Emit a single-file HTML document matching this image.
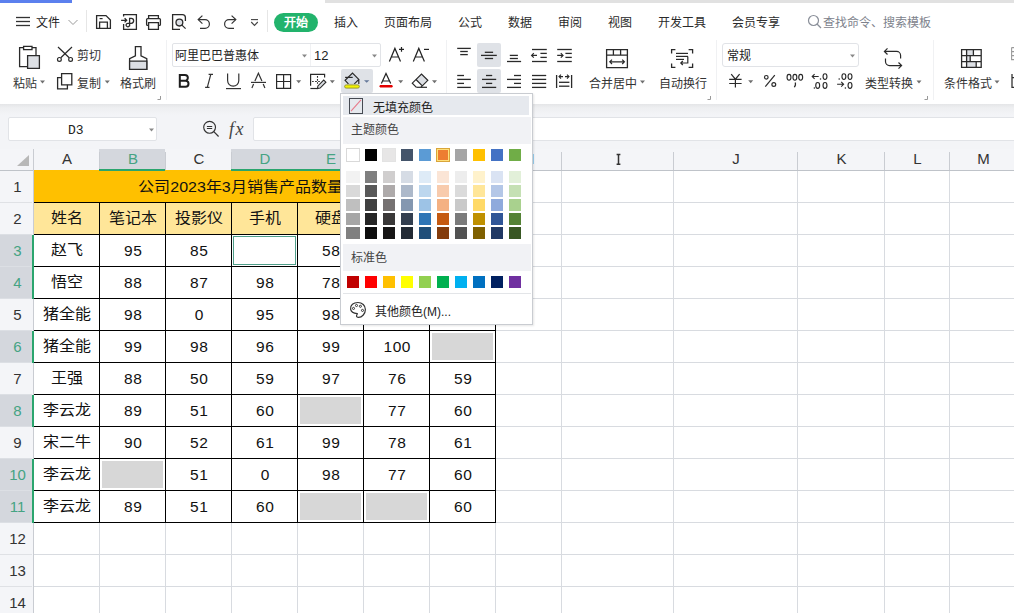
<!DOCTYPE html>
<html lang="zh-CN">
<head>
<meta charset="utf-8">
<style>
*{box-sizing:border-box;margin:0;padding:0}
html,body{width:1014px;height:613px;overflow:hidden;background:#fff}
body{position:relative;font-family:"Liberation Sans",sans-serif;color:#222}
.a{position:absolute}
.t{position:absolute;white-space:nowrap;line-height:1}
svg{position:absolute;overflow:visible}
.tab{position:absolute;font-size:12px;color:#333;line-height:14px;white-space:nowrap}
.rl{position:absolute;font-size:12px;color:#3a3a3a;line-height:14px;white-space:nowrap}
.arr{position:absolute;width:0;height:0;border-left:3px solid transparent;border-right:3px solid transparent;border-top:3px solid #888}
.sep{position:absolute;width:1px;background:#e8e9ec}
.ch{position:absolute;height:20px;font-size:14px;line-height:20px;text-align:center;color:#333}
.rh{position:absolute;left:0;width:32px;font-size:14px;text-align:center;color:#333}
.c{position:absolute;font-size:16px;text-align:center;color:#111;white-space:nowrap}
.hl{position:absolute;height:1px;background:#d9dce1}
.vl{position:absolute;width:1px;background:#d9dce1}
.bk{position:absolute;background:#000}
.sw{position:absolute;width:12px;height:12px}
</style>
</head>
<body>
<div class="a" style="left:0px;top:0px;width:72px;height:3px;background:#5b80ee;"></div>
<div class="a" style="left:325px;top:0px;width:689px;height:3px;background:#e1e1e1;"></div>
<div class="a" style="left:0px;top:104px;width:1014px;height:45px;background:linear-gradient(#e4e5e7,#eeeff1 4px,#f3f4f7 11px);"></div>
<div class="t" style="left:36px;top:16px;font-size:12px;line-height:14px;color:#222;">文件</div>
<div class="a" style="left:86px;top:10px;width:1px;height:22px;background:#e6e6e6;"></div>
<div class="a" style="left:267px;top:10px;width:1px;height:22px;background:#e6e6e6;"></div>
<div class="a" style="left:274px;top:12.5px;width:44px;height:19px;border-radius:10px;background:#22b36c"></div>
<div class="t" style="left:284px;top:16px;font-size:12px;line-height:14px;color:#fff;font-weight:bold">开始</div>
<div class="t" style="left:334px;top:16px;font-size:12px;line-height:14px;color:#2a2a2a;">插入</div>
<div class="t" style="left:384px;top:16px;font-size:12px;line-height:14px;color:#2a2a2a;">页面布局</div>
<div class="t" style="left:458px;top:16px;font-size:12px;line-height:14px;color:#2a2a2a;">公式</div>
<div class="t" style="left:508px;top:16px;font-size:12px;line-height:14px;color:#2a2a2a;">数据</div>
<div class="t" style="left:558px;top:16px;font-size:12px;line-height:14px;color:#2a2a2a;">审阅</div>
<div class="t" style="left:607.5px;top:16px;font-size:12px;line-height:14px;color:#2a2a2a;">视图</div>
<div class="t" style="left:658px;top:16px;font-size:12px;line-height:14px;color:#2a2a2a;">开发工具</div>
<div class="t" style="left:732px;top:16px;font-size:12px;line-height:14px;color:#2a2a2a;">会员专享</div>
<div class="t" style="left:823px;top:16px;font-size:12px;line-height:14px;color:#7d828c;">查找命令、搜索模板</div>
<div class="t" style="left:13px;top:77px;font-size:12px;line-height:14px;color:#333;">粘贴</div>
<div class="t" style="left:77px;top:49px;font-size:12px;line-height:14px;color:#333;">剪切</div>
<div class="t" style="left:77px;top:77px;font-size:12px;line-height:14px;color:#333;">复制</div>
<div class="t" style="left:120px;top:77px;font-size:12px;line-height:14px;color:#333;">格式刷</div>
<div class="a" style="left:166px;top:40px;width:1px;height:60px;background:#f0f1f3;"></div>
<div class="a" style="left:172px;top:43px;width:209px;height:24px;border:1px solid #e1e3e7;border-radius:2px;background:#fff"></div>
<div class="a" style="left:310px;top:44px;width:1px;height:22px;background:#f0f1f3;"></div>
<div class="t" style="left:175px;top:48.5px;font-size:12px;line-height:14px;color:#222;">阿里巴巴普惠体</div>
<div class="t" style="left:314px;top:48.5px;font-size:13px;line-height:14px;color:#222;">12</div>
<div class="a" style="left:340.5px;top:69px;width:32px;height:24px;background:#dfe2e7;border-radius:2px"></div>
<div class="a" style="left:446px;top:40px;width:1px;height:60px;background:#f0f1f3;"></div>
<div class="a" style="left:477px;top:43.3px;width:23.6px;height:23.3px;background:#dfe2e7;border-radius:2px"></div>
<div class="a" style="left:477px;top:69.1px;width:23.6px;height:23.6px;background:#dfe2e7;border-radius:2px"></div>
<div class="t" style="left:589px;top:77px;font-size:12px;line-height:14px;color:#333;">合并居中</div>
<div class="t" style="left:658.5px;top:77px;font-size:12px;line-height:14px;color:#333;">自动换行</div>
<div class="a" style="left:716px;top:40px;width:1px;height:60px;background:#f0f1f3;"></div>
<div class="a" style="left:722px;top:43px;width:137px;height:24px;border:1px solid #e1e3e7;border-radius:3px;background:#fff"></div>
<div class="t" style="left:726.5px;top:48.5px;font-size:12px;line-height:14px;color:#222;">常规</div>
<div class="t" style="left:865px;top:77px;font-size:12px;line-height:14px;color:#333;">类型转换</div>
<div class="a" style="left:933px;top:40px;width:1px;height:60px;background:#f0f1f3;"></div>
<div class="t" style="left:944px;top:77px;font-size:12px;line-height:14px;color:#333;">条件格式</div>
<div class="a" style="left:8px;top:117px;width:149px;height:24px;border:1px solid #e1e3e7;border-radius:2px;background:#fff"></div>
<div class="t" style="left:68px;top:124px;font-size:13px;line-height:14px;color:#222;font-family:'Liberation Mono',monospace">D3</div>
<div class="t" style="left:229px;top:119.5px;font-size:18px;line-height:18px;color:#444;font-family:'Liberation Serif',serif;font-style:italic;letter-spacing:1.5px">fx</div>
<div class="a" style="left:253px;top:117px;width:800px;height:24px;border:1px solid #e1e3e7;border-radius:2px;background:#fff"></div>
<svg style="left:0;top:0" width="1014" height="150" viewBox="0 0 1014 150" fill="none"><path d="M16 17.5 H30" stroke="#333" stroke-width="1.3" fill="none" /><path d="M16 21.5 H30" stroke="#333" stroke-width="1.3" fill="none" /><path d="M16 25.5 H30" stroke="#333" stroke-width="1.3" fill="none" /><path d="M68.5 20 L73 24.5 L77.5 20" stroke="#9a9a9a" stroke-width="1" fill="none" /><path d="M96.6 15.6 H106 L110.4 20 V28.4 H96.6 Z" stroke="#2a2a2a" stroke-width="1.3" fill="none" /><path d="M99.6 28.4 V22.2 H107.4 V28.4" stroke="#2a2a2a" stroke-width="1.3" fill="none" /><path d="M99.6 18.6 H102.6" stroke="#2a2a2a" stroke-width="1.2" fill="none" /><path d="M123.6 16.4 V14.6 H136.4 V29.4 H123.6 V24.1" stroke="#2a2a2a" stroke-width="1.3" fill="none" /><path d="M121.1 20.3 H126.7 M124.6 18.2 L126.7 20.3 L124.6 22.4" stroke="#2a2a2a" stroke-width="1.3" fill="none" /><path d="M129.6 26.2 V18.4 H131.2 A2.45 2.45 0 0 1 131.2 23.3 H128.1 A1.75 1.75 0 1 0 129.6 25" stroke="#2a2a2a" stroke-width="1.3" fill="none" /><path d="M148.6 18.6 V15.6 H158.4 V18.6" stroke="#2a2a2a" stroke-width="1.3" fill="none" /><path d="M148 25.4 H147.6 Q146.6 25.4 146.6 24.4 V19.6 Q146.6 18.6 147.6 18.6 H159.4 Q160.4 18.6 160.4 19.6 V24.4 Q160.4 25.4 159.4 25.4 H159" stroke="#2a2a2a" stroke-width="1.3" fill="none" /><path d="M148.6 22.6 H158.4 V29.4 H148.6 Z" stroke="#2a2a2a" stroke-width="1.3" fill="none" /><path d="M180 29.4 H172.6 V14.6 H182.4 Q185.4 14.6 185.4 17.6 V21" stroke="#2a2a2a" stroke-width="1.3" fill="none" /><circle cx="179.4" cy="22.6" r="3.4" fill="#dde0e5" stroke="#2a2a2a" stroke-width="1.3"/><path d="M181.9 25.1 L185.6 28.6" stroke="#2a2a2a" stroke-width="1.3" fill="none" /><path d="M202.4 15.6 L198.2 19.6 L202.4 23.6" stroke="#333" stroke-width="1.2" fill="none" /><path d="M198.4 19.6 H205 A4.4 4.4 0 0 1 205 28.4 H200" stroke="#333" stroke-width="1.2" fill="none" /><path d="M231.6 15.6 L235.8 19.6 L231.6 23.6" stroke="#333" stroke-width="1.2" fill="none" /><path d="M235.6 19.6 H229 A4.4 4.4 0 0 0 229 28.4 H234" stroke="#333" stroke-width="1.2" fill="none" /><path d="M251 19.6 H258" stroke="#444" stroke-width="1.1" fill="none" /><path d="M251.2 22 L254.5 25.4 L257.8 22" stroke="#444" stroke-width="1.1" fill="none" /><circle cx="813.5" cy="20.5" r="5" fill="none" stroke="#8a8f99" stroke-width="1.2"/><path d="M817 24 L821 28" stroke="#8a8f99" stroke-width="1.2" fill="none" /><path d="M27.4 66.6 H19.6 V47.6 H36 V55.4" stroke="#2a2a2a" stroke-width="1.3" fill="none" /><path d="M23.6 46.4 H32 V49.6 H23.6 Z" stroke="#2a2a2a" stroke-width="1.3" fill="#fff" /><path d="M27.6 55.6 H39.4 V68.4 H27.6 Z" stroke="#2a2a2a" stroke-width="1.3" fill="#dcdfe4" /><path d="M40 80.6 H45 L42.5 83.6 Z" fill="#707070" stroke="none"/><path d="M58 47 L69.2 57.8 M72 47 L60.8 57.8" stroke="#2a2a2a" stroke-width="1.2" fill="none" /><circle cx="59.4" cy="59.4" r="1.9" fill="#fff" stroke="#2a2a2a" stroke-width="1.2"/><circle cx="70.6" cy="59.4" r="1.9" fill="#fff" stroke="#2a2a2a" stroke-width="1.2"/><path d="M61.6 73.6 H71.8 V84.8 H61.6 Z" stroke="#2a2a2a" stroke-width="1.3" fill="none" /><path d="M61.6 77.6 H57.6 V88.8 H67.4 V84.8" stroke="#2a2a2a" stroke-width="1.3" fill="none" /><path d="M104.8 80.6 H109.8 L107.3 83.6 Z" fill="#707070" stroke="none"/><path d="M129.6 61 V58.6 L135.4 55.8 V46.6 H141 V55.8 L146.8 58.6 V69.4 H129.6 Z" stroke="#2a2a2a" stroke-width="1.3" fill="none" /><path d="M129.6 61.2 H146.8 V69.4 H129.6 Z" stroke="#2a2a2a" stroke-width="1.3" fill="#dcdfe4" /><path d="M157.5 99.5 H160.5 V96" stroke="#999" stroke-width="1" fill="none" /><path d="M302 54.5 H307 L304.5 57.5 Z" fill="#888" stroke="none"/><path d="M372 54.5 H377 L374.5 57.5 Z" fill="#888" stroke="none"/><path d="M389.4 61.6 L394.9 48.4 L400.5 61.6 M391.6 57 H398.4" stroke="#222" stroke-width="1.2" fill="none" /><path d="M399 49.4 H404 M401.5 46.9 V51.7" stroke="#222" stroke-width="1.2" fill="none" /><path d="M413.3 61.6 L418.8 48.4 L424.4 61.6 M415.5 57 H422.2" stroke="#222" stroke-width="1.2" fill="none" /><path d="M424 49.4 H429" stroke="#222" stroke-width="1.2" fill="none" /><path d="M179.8 86.8 V74.9 H184.9 A2.95 2.95 0 0 1 184.9 80.8 H179.8 M184.9 80.8 H185.5 A3 3 0 0 1 185.5 86.8 H178.8" stroke="#1e1e1e" stroke-width="2" fill="none" /><path d="M208.6 74.4 H213 M205.1 87.4 H209.5 M210.8 74.4 L207.3 87.4" stroke="#333" stroke-width="1.2" fill="none" /><path d="M227.6 73.6 V80.6 A5.6 5.6 0 0 0 238.8 80.6 V73.6" stroke="#333" stroke-width="1.2" fill="none" /><path d="M226 88.6 H241" stroke="#333" stroke-width="1.2" fill="none" /><path d="M254.9 81 L258.4 73.2 L261.9 81 M253.6 84 L251.9 88 M263.2 84 L264.9 88" stroke="#333" stroke-width="1.2" fill="none" /><path d="M251 82.4 H266" stroke="#333" stroke-width="1.2" fill="none" /><path d="M276.6 74.6 H290.6 V88.4 H276.6 Z M283.6 74.6 V88.4 M276.6 81.5 H290.6" stroke="#2a2a2a" stroke-width="1.2" fill="none" /><path d="M296.2 80.2 H301.2 L298.7 83.2 Z" fill="#707070" stroke="none"/><path d="M310.6 85.8 V74.4 H324.6 V77.6" stroke="#2a2a2a" stroke-width="1.2" fill="none" /><path d="M310.4 88.5 H317.6" stroke="#2a2a2a" stroke-width="1.2" fill="none" /><path d="M312.1 81.5 H313.7 M315.1 81.5 H316.8 M318.2 81.5 H319.8 M317.5 76.1 V77.7 M317.5 79.1 V80.8 M317.5 82.2 V83.8" stroke="#2a2a2a" stroke-width="1.1" fill="none" /><path d="M317.5 88.5 L317.9 85.9 L323.7 80 L325.9 82.2 L320.1 88.1 Z" stroke="#2a2a2a" stroke-width="1.1" fill="#dcdfe4" /><path d="M329.8 80.2 H334.8 L332.3 83.2 Z" fill="#707070" stroke="none"/><path d="M348.4 83.9 L345.1 80.3 L352.5 73.1 L358.8 79.4 L354.3 83.9 Z" stroke="#2a2a2a" stroke-width="0.1" fill="#d3d9e2" /><path d="M348.4 83.9 L345.1 80.3 L352.5 73.1 L358.8 79.4 L354.3 83.9 M358.8 79.4 V84" stroke="#2a2a2a" stroke-width="1.2" fill="none" /><path d="M345.1 77.4 H352.7" stroke="#2a2a2a" stroke-width="1.2" fill="none" /><rect x="344.6" y="84.9" width="14.8" height="3.2" rx="1.6" fill="#f2f200" stroke="#9c9c30" stroke-width="1"/><path d="M364 80.2 H369.4 L366.7 82.8 Z" fill="#65789a" stroke="none"/><path d="M381.4 83.4 L386 73.4 L390.7 83.4 M382.6 81 H389.5" stroke="#222" stroke-width="1.2" fill="none" /><path d="M380.2 85 H392 L393 86.3 L392 87.6 H380.2 L379.2 86.3 Z" fill="#e30000" stroke="none"/><path d="M398.2 80.2 H403.2 L400.7 83.2 Z" fill="#707070" stroke="none"/><path d="M421.5 74 L427.8 80.3 L422.3 85.8 L416 79.5 Z" stroke="#2a2a2a" stroke-width="0.1" fill="#dcdfe4" /><path d="M416.4 87.3 L412.3 83.2 L421.5 74 L427.8 80.3 L420.8 87.3 M416 79.5 L422.3 85.8" stroke="#2a2a2a" stroke-width="1.2" fill="none" /><path d="M416.4 87.3 H427" stroke="#2a2a2a" stroke-width="1.2" fill="none" /><path d="M432 80.2 H437 L434.5 83.2 Z" fill="#707070" stroke="none"/><path d="M457.2 48.4 H470.8" stroke="#2a2a2a" stroke-width="1.3" fill="none" /><path d="M460.2 51.5 H467.8" stroke="#2a2a2a" stroke-width="1.3" fill="none" /><path d="M460.2 54.6 H467.8" stroke="#2a2a2a" stroke-width="1.3" fill="none" /><path d="M484.8 52.3 H493.1" stroke="#2a2a2a" stroke-width="1.3" fill="none" /><path d="M481 55.4 H496.8" stroke="#2a2a2a" stroke-width="1.3" fill="none" /><path d="M484.8 58.5 H493.1" stroke="#2a2a2a" stroke-width="1.3" fill="none" /><path d="M509.8 55.4 H517.9" stroke="#2a2a2a" stroke-width="1.3" fill="none" /><path d="M509.8 58.5 H517.9" stroke="#2a2a2a" stroke-width="1.3" fill="none" /><path d="M507 61.5 H521.1" stroke="#2a2a2a" stroke-width="1.3" fill="none" /><path d="M457.2 75.5 H464" stroke="#2a2a2a" stroke-width="1.3" fill="none" /><path d="M486 75.5 H492.2" stroke="#2a2a2a" stroke-width="1.3" fill="none" /><path d="M514 75.5 H521" stroke="#2a2a2a" stroke-width="1.3" fill="none" /><path d="M457.2 79.4 H470.8" stroke="#2a2a2a" stroke-width="1.3" fill="none" /><path d="M482 79.4 H496.2" stroke="#2a2a2a" stroke-width="1.3" fill="none" /><path d="M507 79.4 H521" stroke="#2a2a2a" stroke-width="1.3" fill="none" /><path d="M457.2 83.4 H464" stroke="#2a2a2a" stroke-width="1.3" fill="none" /><path d="M486 83.4 H492.2" stroke="#2a2a2a" stroke-width="1.3" fill="none" /><path d="M514 83.4 H521" stroke="#2a2a2a" stroke-width="1.3" fill="none" /><path d="M457.2 87.4 H470.8" stroke="#2a2a2a" stroke-width="1.3" fill="none" /><path d="M482 87.4 H496.2" stroke="#2a2a2a" stroke-width="1.3" fill="none" /><path d="M507 87.4 H521" stroke="#2a2a2a" stroke-width="1.3" fill="none" /><path d="M532 49.5 H546.8" stroke="#2a2a2a" stroke-width="1.3" fill="none" /><path d="M540.4 53.4 H546.8" stroke="#2a2a2a" stroke-width="1.3" fill="none" /><path d="M540.4 57.4 H546.8" stroke="#2a2a2a" stroke-width="1.3" fill="none" /><path d="M532 61.5 H546.8" stroke="#2a2a2a" stroke-width="1.3" fill="none" /><path d="M531.6 55.4 H537 M533.8 53.2 L531.6 55.4 L533.8 57.6" stroke="#2a2a2a" stroke-width="1.2" fill="none" /><path d="M557.2 49.5 H571.8" stroke="#2a2a2a" stroke-width="1.3" fill="none" /><path d="M565.4 53.4 H571.8" stroke="#2a2a2a" stroke-width="1.3" fill="none" /><path d="M565.4 57.4 H571.8" stroke="#2a2a2a" stroke-width="1.3" fill="none" /><path d="M557.2 61.5 H571.8" stroke="#2a2a2a" stroke-width="1.3" fill="none" /><path d="M557.2 55.4 H563 M560.8 53.2 L563 55.4 L560.8 57.6" stroke="#2a2a2a" stroke-width="1.2" fill="none" /><path d="M532 75.5 H546.2" stroke="#2a2a2a" stroke-width="1.3" fill="none" /><path d="M532 79.4 H546.2" stroke="#2a2a2a" stroke-width="1.3" fill="none" /><path d="M532 83.4 H546.2" stroke="#2a2a2a" stroke-width="1.3" fill="none" /><path d="M532 87.4 H546.2" stroke="#2a2a2a" stroke-width="1.3" fill="none" /><path d="M556.6 75 V88 M571.6 75 V88" stroke="#2a2a2a" stroke-width="1.3" fill="none" /><path d="M559 76.6 H563 M561 74.6 L559 76.6 L561 78.6 M565 76.6 H569 M567 74.6 L569 76.6 L567 78.6" stroke="#2a2a2a" stroke-width="1.1" fill="none" /><path d="M559 82.3 H569.4" stroke="#2a2a2a" stroke-width="1.3" fill="none" /><path d="M559 86.2 H569.4" stroke="#2a2a2a" stroke-width="1.3" fill="none" /><path d="M606.6 49.6 H627.4 V67.6 H606.6 Z M606.6 55.2 H627.4 M613.4 49.6 V55.2 M620.6 49.6 V55.2" stroke="#2a2a2a" stroke-width="1.3" fill="none" /><path d="M609.8 61.8 H624.4 M612 59.6 L609.8 61.8 L612 64 M622.2 59.6 L624.4 61.8 L622.2 64" stroke="#2a2a2a" stroke-width="1.2" fill="none" /><path d="M640 80.6 H645 L642.5 83.6 Z" fill="#707070" stroke="none"/><path d="M675.4 49.6 H671.6 V53.6 M688.6 49.6 H692.6 V53.6 M671.6 63.4 V67.4 H675.4 M692.6 63.4 V67.4 H688.6" stroke="#2a2a2a" stroke-width="1.3" fill="none" /><path d="M676 53.4 H688" stroke="#2a2a2a" stroke-width="1.2" fill="none" /><path d="M676 56.4 H688" stroke="#2a2a2a" stroke-width="1.2" fill="none" /><path d="M676 59.4 H684" stroke="#2a2a2a" stroke-width="1.2" fill="none" /><path d="M687.8 56.4 V63 H680.8 M682.8 61 L680.8 63 L682.8 65" stroke="#2a2a2a" stroke-width="1.2" fill="none" /><path d="M707.5 99.5 H710.5 V96" stroke="#999" stroke-width="1" fill="none" /><path d="M850 54.5 H855 L852.5 57.5 Z" fill="#888" stroke="none"/><path d="M731.2 74.2 L735.4 79.2 L739.6 74.2 M729.2 79.4 H741.6 M729.2 83.5 H741.6 M735.4 79.2 V87.6" stroke="#2a2a2a" stroke-width="1.2" fill="none" /><path d="M748.2 80.2 H753.2 L750.7 83.2 Z" fill="#707070" stroke="none"/><circle cx="766.3" cy="77.3" r="1.8" fill="none" stroke="#2a2a2a" stroke-width="1.2"/><circle cx="773.8" cy="84.5" r="1.9" fill="none" stroke="#2a2a2a" stroke-width="1.2"/><path d="M774.8 75.2 L765.3 86.6" stroke="#2a2a2a" stroke-width="1.2" fill="none" /><ellipse cx="789" cy="77.3" rx="1.95" ry="2.9" fill="none" stroke="#2a2a2a" stroke-width="1.15"/><ellipse cx="794.9" cy="77.3" rx="1.95" ry="2.9" fill="none" stroke="#2a2a2a" stroke-width="1.15"/><ellipse cx="800.7" cy="77.3" rx="1.95" ry="2.9" fill="none" stroke="#2a2a2a" stroke-width="1.15"/><path d="M795.4 82.6 V85 L794.4 87.2" stroke="#2a2a2a" stroke-width="1.3" fill="none" /><path d="M812.2 76.5 H818.7 M814.6 74.1 L812.2 76.5 L814.6 78.9" stroke="#2a2a2a" stroke-width="1.1" fill="none" /><rect x="819.85" y="78.35" width="1.3" height="1.3" fill="#2a2a2a"/><ellipse cx="825" cy="76.6" rx="1.95" ry="2.9" fill="none" stroke="#2a2a2a" stroke-width="1.15"/><rect x="813.75" y="87.35" width="1.3" height="1.3" fill="#2a2a2a"/><ellipse cx="817.7" cy="85.4" rx="1.95" ry="2.9" fill="none" stroke="#2a2a2a" stroke-width="1.15"/><ellipse cx="825" cy="85.4" rx="1.95" ry="2.9" fill="none" stroke="#2a2a2a" stroke-width="1.15"/><rect x="838.5500000000001" y="78.35" width="1.3" height="1.3" fill="#2a2a2a"/><ellipse cx="843.9" cy="76.6" rx="1.95" ry="2.9" fill="none" stroke="#2a2a2a" stroke-width="1.15"/><ellipse cx="850" cy="76.6" rx="1.95" ry="2.9" fill="none" stroke="#2a2a2a" stroke-width="1.15"/><path d="M837.1 84.3 H843.6 M841.2 81.9 L843.6 84.3 L841.2 86.7" stroke="#2a2a2a" stroke-width="1.1" fill="none" /><rect x="844.75" y="87.35" width="1.3" height="1.3" fill="#2a2a2a"/><ellipse cx="850" cy="85.4" rx="1.95" ry="2.9" fill="none" stroke="#2a2a2a" stroke-width="1.15"/><path d="M884.4 51.4 H896.6 A4 4 0 0 1 900.6 55.4 V58.6 M887.5 48.3 L884.4 51.4 L887.5 54.5" stroke="#2a2a2a" stroke-width="1.2" fill="none" /><path d="M885.5 58.4 V61.6 A4 4 0 0 0 889.5 65.6 H901.6 M898.5 62.5 L901.6 65.6 L898.5 68.7" stroke="#2a2a2a" stroke-width="1.2" fill="none" /><path d="M916.5 80.6 H921.5 L919.0 83.6 Z" fill="#707070" stroke="none"/><path d="M924.5 99.5 H927.5 V96" stroke="#999" stroke-width="1" fill="none" /><rect x="967" y="50" width="6" height="5.5" fill="#dcdfe4"/><rect x="967" y="56" width="3" height="5.5" fill="#dcdfe4"/><rect x="967" y="62" width="9" height="5" fill="#dcdfe4"/><path d="M961.6 49.6 H981.2 V67.4 H961.6 Z M961.6 55.6 H981.2 M961.6 61.6 H981.2 M966.6 49.6 V67.4 M973.4 49.6 V55.6 M970.2 55.6 V61.6 M976.2 61.6 V67.4" stroke="#2a2a2a" stroke-width="1.3" fill="none" /><path d="M994.5 80.6 H999.5 L997.0 83.6 Z" fill="#707070" stroke="none"/><path d="M1011.6 47.6 H1020 M1011.6 47.6 V59.6 H1020 M1011.6 51.6 H1020 M1011.6 55.6 H1020" stroke="#9a9a9a" stroke-width="1.1" fill="none" /><path d="M1012 74 V88 M1011.5 77.6 H1014 M1011.5 87.4 H1014" stroke="#333" stroke-width="1.3" fill="none" /><path d="M149 128.4 H154 L151.5 131.4 Z" fill="#888" stroke="none"/><circle cx="209.6" cy="127.3" r="5.9" fill="none" stroke="#333" stroke-width="1.15"/><path d="M206.9 126.5 H212.2 M206.9 128.5 H212.2" stroke="#333" stroke-width="1.1" fill="none" /><path d="M213.8 131.6 L218.6 136.5" stroke="#333" stroke-width="1.2" fill="none" /></svg>
<div class="a" style="left:0px;top:149px;width:1014px;height:21px;background:#f4f5f8;"></div>
<div class="a" style="left:0px;top:170px;width:33px;height:443px;background:#f4f5f8;"></div>
<div class="a" style="left:99px;top:149px;width:66px;height:21px;background:#d4d7dd;"></div>
<div class="a" style="left:99px;top:169px;width:66px;height:2px;background:#2ba56e;"></div>
<div class="a" style="left:231px;top:149px;width:66px;height:21px;background:#d4d7dd;"></div>
<div class="a" style="left:231px;top:169px;width:66px;height:2px;background:#2ba56e;"></div>
<div class="a" style="left:297px;top:149px;width:66px;height:21px;background:#d4d7dd;"></div>
<div class="a" style="left:297px;top:169px;width:66px;height:2px;background:#2ba56e;"></div>
<div class="a" style="left:363px;top:149px;width:66px;height:21px;background:#d4d7dd;"></div>
<div class="a" style="left:363px;top:169px;width:66px;height:2px;background:#2ba56e;"></div>
<div class="a" style="left:429px;top:149px;width:66px;height:21px;background:#d4d7dd;"></div>
<div class="a" style="left:429px;top:169px;width:66px;height:2px;background:#2ba56e;"></div>
<div class="a" style="left:0px;top:170px;width:1014px;height:1px;background:#bfc3c9;"></div>
<div class="a" style="left:0px;top:235px;width:33px;height:32px;background:#d4d7dd;"></div>
<div class="a" style="left:32px;top:235px;width:2px;height:32px;background:#2ba56e;"></div>
<div class="a" style="left:0px;top:267px;width:33px;height:32px;background:#d4d7dd;"></div>
<div class="a" style="left:32px;top:267px;width:2px;height:32px;background:#2ba56e;"></div>
<div class="a" style="left:0px;top:331px;width:33px;height:32px;background:#d4d7dd;"></div>
<div class="a" style="left:32px;top:331px;width:2px;height:32px;background:#2ba56e;"></div>
<div class="a" style="left:0px;top:395px;width:33px;height:32px;background:#d4d7dd;"></div>
<div class="a" style="left:32px;top:395px;width:2px;height:32px;background:#2ba56e;"></div>
<div class="a" style="left:0px;top:459px;width:33px;height:32px;background:#d4d7dd;"></div>
<div class="a" style="left:32px;top:459px;width:2px;height:32px;background:#2ba56e;"></div>
<div class="a" style="left:0px;top:491px;width:33px;height:32px;background:#d4d7dd;"></div>
<div class="a" style="left:32px;top:491px;width:2px;height:32px;background:#2ba56e;"></div>
<div class="a" style="left:99px;top:152px;width:1px;height:18px;background:#c9ccd2;"></div>
<div class="a" style="left:165px;top:152px;width:1px;height:18px;background:#c9ccd2;"></div>
<div class="a" style="left:231px;top:152px;width:1px;height:18px;background:#c9ccd2;"></div>
<div class="a" style="left:495px;top:152px;width:1px;height:18px;background:#c9ccd2;"></div>
<div class="a" style="left:561px;top:152px;width:1px;height:18px;background:#c9ccd2;"></div>
<div class="a" style="left:673px;top:152px;width:1px;height:18px;background:#c9ccd2;"></div>
<div class="a" style="left:797px;top:152px;width:1px;height:18px;background:#c9ccd2;"></div>
<div class="a" style="left:884px;top:152px;width:1px;height:18px;background:#c9ccd2;"></div>
<div class="a" style="left:949px;top:152px;width:1px;height:18px;background:#c9ccd2;"></div>
<div class="a" style="left:33px;top:149px;width:1px;height:464px;background:#c9ccd2;"></div>
<div class="a" style="left:32px;top:235px;width:2px;height:32px;background:#2ba56e;"></div>
<div class="a" style="left:32px;top:267px;width:2px;height:32px;background:#2ba56e;"></div>
<div class="a" style="left:32px;top:331px;width:2px;height:32px;background:#2ba56e;"></div>
<div class="a" style="left:32px;top:395px;width:2px;height:32px;background:#2ba56e;"></div>
<div class="a" style="left:32px;top:459px;width:2px;height:32px;background:#2ba56e;"></div>
<div class="a" style="left:32px;top:491px;width:2px;height:32px;background:#2ba56e;"></div>
<div class="a" style="left:0px;top:202px;width:32px;height:1px;background:#dfe1e5;"></div>
<div class="a" style="left:0px;top:234px;width:32px;height:1px;background:#dcdfe4;"></div>
<div class="a" style="left:0px;top:266px;width:32px;height:1px;background:#dcdfe4;"></div>
<div class="a" style="left:0px;top:298px;width:32px;height:1px;background:#dcdfe4;"></div>
<div class="a" style="left:0px;top:330px;width:32px;height:1px;background:#dcdfe4;"></div>
<div class="a" style="left:0px;top:362px;width:32px;height:1px;background:#dcdfe4;"></div>
<div class="a" style="left:0px;top:394px;width:32px;height:1px;background:#dcdfe4;"></div>
<div class="a" style="left:0px;top:426px;width:32px;height:1px;background:#dcdfe4;"></div>
<div class="a" style="left:0px;top:458px;width:32px;height:1px;background:#dcdfe4;"></div>
<div class="a" style="left:0px;top:490px;width:32px;height:1px;background:#dcdfe4;"></div>
<div class="a" style="left:0px;top:522px;width:32px;height:1px;background:#dcdfe4;"></div>
<div class="a" style="left:0px;top:554px;width:32px;height:1px;background:#dfe1e5;"></div>
<div class="a" style="left:0px;top:586px;width:32px;height:1px;background:#dfe1e5;"></div>
<svg style="left:17px;top:155px" width="12" height="11" viewBox="0 0 12 11"><path d="M12 0 L12 11 L0 11 Z" fill="#b8b8b8" stroke="none"/></svg>
<div class="t" style="left:34px;top:151px;width:66px;text-align:center;font-size:15px;line-height:16px;color:#333;">A</div>
<div class="t" style="left:100px;top:151px;width:66px;text-align:center;font-size:15px;line-height:16px;color:#45a383;">B</div>
<div class="t" style="left:166px;top:151px;width:66px;text-align:center;font-size:15px;line-height:16px;color:#333;">C</div>
<div class="t" style="left:232px;top:151px;width:66px;text-align:center;font-size:15px;line-height:16px;color:#45a383;">D</div>
<div class="t" style="left:298px;top:151px;width:66px;text-align:center;font-size:15px;line-height:16px;color:#45a383;">E</div>
<div class="t" style="left:364px;top:151px;width:66px;text-align:center;font-size:15px;line-height:16px;color:#45a383;">F</div>
<div class="t" style="left:430px;top:151px;width:66px;text-align:center;font-size:15px;line-height:16px;color:#45a383;">G</div>
<div class="t" style="left:496px;top:151px;width:66px;text-align:center;font-size:15px;line-height:16px;color:#333;">H</div>
<svg style="left:0;top:0" width="1014" height="200" viewBox="0 0 1014 200"><path d="M618.5 154.2 V164.6 M616.6 154.4 H620.4 M616.6 164.3 H620.4" stroke="#333" stroke-width="1.5" fill="none"/></svg>
<div class="t" style="left:674px;top:151px;width:124px;text-align:center;font-size:15px;line-height:16px;color:#333;">J</div>
<div class="t" style="left:798px;top:151px;width:87px;text-align:center;font-size:15px;line-height:16px;color:#333;">K</div>
<div class="t" style="left:885px;top:151px;width:65px;text-align:center;font-size:15px;line-height:16px;color:#333;">L</div>
<div class="t" style="left:950px;top:151px;width:67px;text-align:center;font-size:15px;line-height:16px;color:#333;">M</div>
<div class="t" style="left:1px;top:178.5px;width:33px;text-align:center;font-size:15px;line-height:16px;color:#333;">1</div>
<div class="t" style="left:1px;top:210.5px;width:33px;text-align:center;font-size:15px;line-height:16px;color:#333;">2</div>
<div class="t" style="left:1px;top:242.5px;width:33px;text-align:center;font-size:15px;line-height:16px;color:#45a383;">3</div>
<div class="t" style="left:1px;top:274.5px;width:33px;text-align:center;font-size:15px;line-height:16px;color:#45a383;">4</div>
<div class="t" style="left:1px;top:306.5px;width:33px;text-align:center;font-size:15px;line-height:16px;color:#333;">5</div>
<div class="t" style="left:1px;top:338.5px;width:33px;text-align:center;font-size:15px;line-height:16px;color:#45a383;">6</div>
<div class="t" style="left:1px;top:370.5px;width:33px;text-align:center;font-size:15px;line-height:16px;color:#333;">7</div>
<div class="t" style="left:1px;top:402.5px;width:33px;text-align:center;font-size:15px;line-height:16px;color:#45a383;">8</div>
<div class="t" style="left:1px;top:434.5px;width:33px;text-align:center;font-size:15px;line-height:16px;color:#333;">9</div>
<div class="t" style="left:1px;top:466.5px;width:33px;text-align:center;font-size:15px;line-height:16px;color:#45a383;">10</div>
<div class="t" style="left:1px;top:498.5px;width:33px;text-align:center;font-size:15px;line-height:16px;color:#45a383;">11</div>
<div class="t" style="left:1px;top:530.5px;width:33px;text-align:center;font-size:15px;line-height:16px;color:#333;">12</div>
<div class="t" style="left:1px;top:562.5px;width:33px;text-align:center;font-size:15px;line-height:16px;color:#333;">13</div>
<div class="t" style="left:1px;top:594.5px;width:33px;text-align:center;font-size:15px;line-height:16px;color:#333;">14</div>
<div class="a" style="left:34px;top:202px;width:980px;height:1px;background:#d8dbe0;"></div>
<div class="a" style="left:34px;top:234px;width:980px;height:1px;background:#d8dbe0;"></div>
<div class="a" style="left:34px;top:266px;width:980px;height:1px;background:#d8dbe0;"></div>
<div class="a" style="left:34px;top:298px;width:980px;height:1px;background:#d8dbe0;"></div>
<div class="a" style="left:34px;top:330px;width:980px;height:1px;background:#d8dbe0;"></div>
<div class="a" style="left:34px;top:362px;width:980px;height:1px;background:#d8dbe0;"></div>
<div class="a" style="left:34px;top:394px;width:980px;height:1px;background:#d8dbe0;"></div>
<div class="a" style="left:34px;top:426px;width:980px;height:1px;background:#d8dbe0;"></div>
<div class="a" style="left:34px;top:458px;width:980px;height:1px;background:#d8dbe0;"></div>
<div class="a" style="left:34px;top:490px;width:980px;height:1px;background:#d8dbe0;"></div>
<div class="a" style="left:34px;top:522px;width:980px;height:1px;background:#d8dbe0;"></div>
<div class="a" style="left:34px;top:554px;width:980px;height:1px;background:#d8dbe0;"></div>
<div class="a" style="left:34px;top:586px;width:980px;height:1px;background:#d8dbe0;"></div>
<div class="a" style="left:34px;top:618px;width:980px;height:1px;background:#d8dbe0;"></div>
<div class="a" style="left:99px;top:171px;width:1px;height:442px;background:#d8dbe0;"></div>
<div class="a" style="left:165px;top:171px;width:1px;height:442px;background:#d8dbe0;"></div>
<div class="a" style="left:231px;top:171px;width:1px;height:442px;background:#d8dbe0;"></div>
<div class="a" style="left:297px;top:171px;width:1px;height:442px;background:#d8dbe0;"></div>
<div class="a" style="left:363px;top:171px;width:1px;height:442px;background:#d8dbe0;"></div>
<div class="a" style="left:429px;top:171px;width:1px;height:442px;background:#d8dbe0;"></div>
<div class="a" style="left:495px;top:171px;width:1px;height:442px;background:#d8dbe0;"></div>
<div class="a" style="left:561px;top:171px;width:1px;height:442px;background:#d8dbe0;"></div>
<div class="a" style="left:673px;top:171px;width:1px;height:442px;background:#d8dbe0;"></div>
<div class="a" style="left:797px;top:171px;width:1px;height:442px;background:#d8dbe0;"></div>
<div class="a" style="left:884px;top:171px;width:1px;height:442px;background:#d8dbe0;"></div>
<div class="a" style="left:949px;top:171px;width:1px;height:442px;background:#d8dbe0;"></div>
<div class="a" style="left:34px;top:170px;width:462px;height:32px;background:#ffc000;"></div>
<div class="a" style="left:99px;top:169px;width:66px;height:2px;background:#2ba56e;"></div>
<div class="a" style="left:231px;top:169px;width:66px;height:2px;background:#2ba56e;"></div>
<div class="a" style="left:297px;top:169px;width:66px;height:2px;background:#2ba56e;"></div>
<div class="a" style="left:363px;top:169px;width:66px;height:2px;background:#2ba56e;"></div>
<div class="a" style="left:429px;top:169px;width:66px;height:2px;background:#2ba56e;"></div>
<div class="a" style="left:34px;top:203px;width:462px;height:31px;background:#ffe699;"></div>
<div class="a" style="left:34px;top:235px;width:462px;height:288px;background:#fff;"></div>
<div class="a" style="left:102px;top:461px;width:61px;height:27px;background:#d7d7d7;"></div>
<div class="a" style="left:300px;top:397px;width:61px;height:27px;background:#d7d7d7;"></div>
<div class="a" style="left:300px;top:493px;width:61px;height:27px;background:#d7d7d7;"></div>
<div class="a" style="left:366px;top:493px;width:61px;height:27px;background:#d7d7d7;"></div>
<div class="a" style="left:432px;top:333px;width:61px;height:27px;background:#d7d7d7;"></div>
<div class="a" style="left:34px;top:202px;width:462px;height:1px;background:#000;"></div>
<div class="a" style="left:34px;top:234px;width:462px;height:1px;background:#000;"></div>
<div class="a" style="left:34px;top:266px;width:462px;height:1px;background:#000;"></div>
<div class="a" style="left:34px;top:298px;width:462px;height:1px;background:#000;"></div>
<div class="a" style="left:34px;top:330px;width:462px;height:1px;background:#000;"></div>
<div class="a" style="left:34px;top:362px;width:462px;height:1px;background:#000;"></div>
<div class="a" style="left:34px;top:394px;width:462px;height:1px;background:#000;"></div>
<div class="a" style="left:34px;top:426px;width:462px;height:1px;background:#000;"></div>
<div class="a" style="left:34px;top:458px;width:462px;height:1px;background:#000;"></div>
<div class="a" style="left:34px;top:490px;width:462px;height:1px;background:#000;"></div>
<div class="a" style="left:34px;top:522px;width:462px;height:1px;background:#000;"></div>
<div class="a" style="left:99px;top:202px;width:1px;height:321px;background:#000;"></div>
<div class="a" style="left:165px;top:202px;width:1px;height:321px;background:#000;"></div>
<div class="a" style="left:231px;top:202px;width:1px;height:321px;background:#000;"></div>
<div class="a" style="left:297px;top:202px;width:1px;height:321px;background:#000;"></div>
<div class="a" style="left:363px;top:202px;width:1px;height:321px;background:#000;"></div>
<div class="a" style="left:429px;top:202px;width:1px;height:321px;background:#000;"></div>
<div class="a" style="left:495px;top:171px;width:1px;height:352px;background:#000;"></div>
<div class="a" style="left:233px;top:236px;width:63px;height:29px;border:1px solid #4f9f8a"></div>
<div class="t" style="left:34px;top:210px;width:66px;text-align:center;font-size:16px;line-height:18px;color:#111;transform:scaleY(.89)">姓名</div>
<div class="t" style="left:100px;top:210px;width:66px;text-align:center;font-size:16px;line-height:18px;color:#111;transform:scaleY(.89)">笔记本</div>
<div class="t" style="left:166px;top:210px;width:66px;text-align:center;font-size:16px;line-height:18px;color:#111;transform:scaleY(.89)">投影仪</div>
<div class="t" style="left:232px;top:210px;width:66px;text-align:center;font-size:16px;line-height:18px;color:#111;transform:scaleY(.89)">手机</div>
<div class="t" style="left:298px;top:210px;width:66px;text-align:center;font-size:16px;line-height:18px;color:#111;transform:scaleY(.89)">硬盘</div>
<div class="t" style="left:34px;top:242px;width:66px;text-align:center;font-size:16px;line-height:18px;color:#111;transform:scaleY(.89)">赵飞</div>
<div class="t" style="left:100.5px;top:242px;width:65.5px;text-align:center;font-size:15.5px;line-height:18px;color:#111;letter-spacing:0.6px">95</div>
<div class="t" style="left:166.5px;top:242px;width:65.5px;text-align:center;font-size:15.5px;line-height:18px;color:#111;letter-spacing:0.6px">85</div>
<div class="t" style="left:298.5px;top:242px;width:65.5px;text-align:center;font-size:15.5px;line-height:18px;color:#111;letter-spacing:0.6px">58</div>
<div class="t" style="left:34px;top:274px;width:66px;text-align:center;font-size:16px;line-height:18px;color:#111;transform:scaleY(.89)">悟空</div>
<div class="t" style="left:100.5px;top:274px;width:65.5px;text-align:center;font-size:15.5px;line-height:18px;color:#111;letter-spacing:0.6px">88</div>
<div class="t" style="left:166.5px;top:274px;width:65.5px;text-align:center;font-size:15.5px;line-height:18px;color:#111;letter-spacing:0.6px">87</div>
<div class="t" style="left:232.5px;top:274px;width:65.5px;text-align:center;font-size:15.5px;line-height:18px;color:#111;letter-spacing:0.6px">98</div>
<div class="t" style="left:298.5px;top:274px;width:65.5px;text-align:center;font-size:15.5px;line-height:18px;color:#111;letter-spacing:0.6px">78</div>
<div class="t" style="left:34px;top:306px;width:66px;text-align:center;font-size:16px;line-height:18px;color:#111;transform:scaleY(.89)">猪全能</div>
<div class="t" style="left:100.5px;top:306px;width:65.5px;text-align:center;font-size:15.5px;line-height:18px;color:#111;letter-spacing:0.6px">98</div>
<div class="t" style="left:166.5px;top:306px;width:65.5px;text-align:center;font-size:15.5px;line-height:18px;color:#111;letter-spacing:0.6px">0</div>
<div class="t" style="left:232.5px;top:306px;width:65.5px;text-align:center;font-size:15.5px;line-height:18px;color:#111;letter-spacing:0.6px">95</div>
<div class="t" style="left:298.5px;top:306px;width:65.5px;text-align:center;font-size:15.5px;line-height:18px;color:#111;letter-spacing:0.6px">98</div>
<div class="t" style="left:34px;top:338px;width:66px;text-align:center;font-size:16px;line-height:18px;color:#111;transform:scaleY(.89)">猪全能</div>
<div class="t" style="left:100.5px;top:338px;width:65.5px;text-align:center;font-size:15.5px;line-height:18px;color:#111;letter-spacing:0.6px">99</div>
<div class="t" style="left:166.5px;top:338px;width:65.5px;text-align:center;font-size:15.5px;line-height:18px;color:#111;letter-spacing:0.6px">98</div>
<div class="t" style="left:232.5px;top:338px;width:65.5px;text-align:center;font-size:15.5px;line-height:18px;color:#111;letter-spacing:0.6px">96</div>
<div class="t" style="left:298.5px;top:338px;width:65.5px;text-align:center;font-size:15.5px;line-height:18px;color:#111;letter-spacing:0.6px">99</div>
<div class="t" style="left:364.5px;top:338px;width:65.5px;text-align:center;font-size:15.5px;line-height:18px;color:#111;letter-spacing:0.6px">100</div>
<div class="t" style="left:34px;top:370px;width:66px;text-align:center;font-size:16px;line-height:18px;color:#111;transform:scaleY(.89)">王强</div>
<div class="t" style="left:100.5px;top:370px;width:65.5px;text-align:center;font-size:15.5px;line-height:18px;color:#111;letter-spacing:0.6px">88</div>
<div class="t" style="left:166.5px;top:370px;width:65.5px;text-align:center;font-size:15.5px;line-height:18px;color:#111;letter-spacing:0.6px">50</div>
<div class="t" style="left:232.5px;top:370px;width:65.5px;text-align:center;font-size:15.5px;line-height:18px;color:#111;letter-spacing:0.6px">59</div>
<div class="t" style="left:298.5px;top:370px;width:65.5px;text-align:center;font-size:15.5px;line-height:18px;color:#111;letter-spacing:0.6px">97</div>
<div class="t" style="left:364.5px;top:370px;width:65.5px;text-align:center;font-size:15.5px;line-height:18px;color:#111;letter-spacing:0.6px">76</div>
<div class="t" style="left:430.5px;top:370px;width:65.5px;text-align:center;font-size:15.5px;line-height:18px;color:#111;letter-spacing:0.6px">59</div>
<div class="t" style="left:34px;top:402px;width:66px;text-align:center;font-size:16px;line-height:18px;color:#111;transform:scaleY(.89)">李云龙</div>
<div class="t" style="left:100.5px;top:402px;width:65.5px;text-align:center;font-size:15.5px;line-height:18px;color:#111;letter-spacing:0.6px">89</div>
<div class="t" style="left:166.5px;top:402px;width:65.5px;text-align:center;font-size:15.5px;line-height:18px;color:#111;letter-spacing:0.6px">51</div>
<div class="t" style="left:232.5px;top:402px;width:65.5px;text-align:center;font-size:15.5px;line-height:18px;color:#111;letter-spacing:0.6px">60</div>
<div class="t" style="left:364.5px;top:402px;width:65.5px;text-align:center;font-size:15.5px;line-height:18px;color:#111;letter-spacing:0.6px">77</div>
<div class="t" style="left:430.5px;top:402px;width:65.5px;text-align:center;font-size:15.5px;line-height:18px;color:#111;letter-spacing:0.6px">60</div>
<div class="t" style="left:34px;top:434px;width:66px;text-align:center;font-size:16px;line-height:18px;color:#111;transform:scaleY(.89)">宋二牛</div>
<div class="t" style="left:100.5px;top:434px;width:65.5px;text-align:center;font-size:15.5px;line-height:18px;color:#111;letter-spacing:0.6px">90</div>
<div class="t" style="left:166.5px;top:434px;width:65.5px;text-align:center;font-size:15.5px;line-height:18px;color:#111;letter-spacing:0.6px">52</div>
<div class="t" style="left:232.5px;top:434px;width:65.5px;text-align:center;font-size:15.5px;line-height:18px;color:#111;letter-spacing:0.6px">61</div>
<div class="t" style="left:298.5px;top:434px;width:65.5px;text-align:center;font-size:15.5px;line-height:18px;color:#111;letter-spacing:0.6px">99</div>
<div class="t" style="left:364.5px;top:434px;width:65.5px;text-align:center;font-size:15.5px;line-height:18px;color:#111;letter-spacing:0.6px">78</div>
<div class="t" style="left:430.5px;top:434px;width:65.5px;text-align:center;font-size:15.5px;line-height:18px;color:#111;letter-spacing:0.6px">61</div>
<div class="t" style="left:34px;top:466px;width:66px;text-align:center;font-size:16px;line-height:18px;color:#111;transform:scaleY(.89)">李云龙</div>
<div class="t" style="left:166.5px;top:466px;width:65.5px;text-align:center;font-size:15.5px;line-height:18px;color:#111;letter-spacing:0.6px">51</div>
<div class="t" style="left:232.5px;top:466px;width:65.5px;text-align:center;font-size:15.5px;line-height:18px;color:#111;letter-spacing:0.6px">0</div>
<div class="t" style="left:298.5px;top:466px;width:65.5px;text-align:center;font-size:15.5px;line-height:18px;color:#111;letter-spacing:0.6px">98</div>
<div class="t" style="left:364.5px;top:466px;width:65.5px;text-align:center;font-size:15.5px;line-height:18px;color:#111;letter-spacing:0.6px">77</div>
<div class="t" style="left:430.5px;top:466px;width:65.5px;text-align:center;font-size:15.5px;line-height:18px;color:#111;letter-spacing:0.6px">60</div>
<div class="t" style="left:34px;top:498px;width:66px;text-align:center;font-size:16px;line-height:18px;color:#111;transform:scaleY(.89)">李云龙</div>
<div class="t" style="left:100.5px;top:498px;width:65.5px;text-align:center;font-size:15.5px;line-height:18px;color:#111;letter-spacing:0.6px">89</div>
<div class="t" style="left:166.5px;top:498px;width:65.5px;text-align:center;font-size:15.5px;line-height:18px;color:#111;letter-spacing:0.6px">51</div>
<div class="t" style="left:232.5px;top:498px;width:65.5px;text-align:center;font-size:15.5px;line-height:18px;color:#111;letter-spacing:0.6px">60</div>
<div class="t" style="left:430.5px;top:498px;width:65.5px;text-align:center;font-size:15.5px;line-height:18px;color:#111;letter-spacing:0.6px">60</div>
<div class="t" style="left:34px;top:178px;width:461px;text-align:center;font-size:16px;line-height:18px;color:#111;transform:scaleY(.92)">公司2023年3月销售产品数量统计表</div>
<div class="a" style="left:340px;top:93px;width:193px;height:232px;background:#fff;border:1px solid #c9ccd1;box-shadow:1px 1px 2px rgba(0,0,0,.10)"></div>
<div class="a" style="left:343px;top:96px;width:186px;height:19px;background:#e6e9ee;"></div>
<div class="a" style="left:349px;top:98px;width:14px;height:15.5px;border:1.3px solid #454a52"></div>
<svg style="left:349px;top:98px" width="14" height="15" viewBox="0 0 14 15"><path d="M2 13.2 L12 1.8" stroke="#e77b8c" stroke-width="1.1"/></svg>
<div class="t" style="left:373px;top:100.5px;font-size:12px;line-height:14px;color:#222;">无填充颜色</div>
<div class="a" style="left:343px;top:117px;width:188px;height:27px;background:#f1f2f5;"></div>
<div class="t" style="left:351px;top:123px;font-size:12px;line-height:14px;color:#444;">主题颜色</div>
<div class="sw" style="left:347px;top:149px;background:#ffffff;outline:1px solid #d9d9d9;"></div>
<div class="sw" style="left:346px;top:170.5px;width:14px;height:12.5px;background:#f2f2f2"></div>
<div class="sw" style="left:346px;top:184.5px;width:14px;height:12.5px;background:#d9d9d9"></div>
<div class="sw" style="left:346px;top:198.5px;width:14px;height:12.5px;background:#bfbfbf"></div>
<div class="sw" style="left:346px;top:212.5px;width:14px;height:12.5px;background:#a6a6a6"></div>
<div class="sw" style="left:346px;top:226.5px;width:14px;height:12.5px;background:#808080"></div>
<div class="sw" style="left:365px;top:149px;background:#000000;"></div>
<div class="sw" style="left:365px;top:170.5px;width:12px;height:12.5px;background:#7f7f7f"></div>
<div class="sw" style="left:365px;top:184.5px;width:12px;height:12.5px;background:#595959"></div>
<div class="sw" style="left:365px;top:198.5px;width:12px;height:12.5px;background:#404040"></div>
<div class="sw" style="left:365px;top:212.5px;width:12px;height:12.5px;background:#262626"></div>
<div class="sw" style="left:365px;top:226.5px;width:12px;height:12.5px;background:#0d0d0d"></div>
<div class="sw" style="left:383px;top:149px;background:#e7e6e6;outline:1px solid #e3e3e3;"></div>
<div class="sw" style="left:383px;top:170.5px;width:12px;height:12.5px;background:#d0cece"></div>
<div class="sw" style="left:383px;top:184.5px;width:12px;height:12.5px;background:#aeaaaa"></div>
<div class="sw" style="left:383px;top:198.5px;width:12px;height:12.5px;background:#757171"></div>
<div class="sw" style="left:383px;top:212.5px;width:12px;height:12.5px;background:#3a3838"></div>
<div class="sw" style="left:383px;top:226.5px;width:12px;height:12.5px;background:#171616"></div>
<div class="sw" style="left:401px;top:149px;background:#44546a;"></div>
<div class="sw" style="left:401px;top:170.5px;width:12px;height:12.5px;background:#d6dce5"></div>
<div class="sw" style="left:401px;top:184.5px;width:12px;height:12.5px;background:#adb9ca"></div>
<div class="sw" style="left:401px;top:198.5px;width:12px;height:12.5px;background:#8497b0"></div>
<div class="sw" style="left:401px;top:212.5px;width:12px;height:12.5px;background:#333f50"></div>
<div class="sw" style="left:401px;top:226.5px;width:12px;height:12.5px;background:#222a35"></div>
<div class="sw" style="left:419px;top:149px;background:#5b9bd5;"></div>
<div class="sw" style="left:419px;top:170.5px;width:12px;height:12.5px;background:#deebf7"></div>
<div class="sw" style="left:419px;top:184.5px;width:12px;height:12.5px;background:#bdd7ee"></div>
<div class="sw" style="left:419px;top:198.5px;width:12px;height:12.5px;background:#9dc3e6"></div>
<div class="sw" style="left:419px;top:212.5px;width:12px;height:12.5px;background:#2e75b6"></div>
<div class="sw" style="left:419px;top:226.5px;width:12px;height:12.5px;background:#1f4e79"></div>
<div class="sw" style="left:437px;top:149px;background:#ed7d31;"></div>
<div class="sw" style="left:437px;top:170.5px;width:12px;height:12.5px;background:#fbe5d6"></div>
<div class="sw" style="left:437px;top:184.5px;width:12px;height:12.5px;background:#f8cbad"></div>
<div class="sw" style="left:437px;top:198.5px;width:12px;height:12.5px;background:#f4b183"></div>
<div class="sw" style="left:437px;top:212.5px;width:12px;height:12.5px;background:#c55a11"></div>
<div class="sw" style="left:437px;top:226.5px;width:12px;height:12.5px;background:#843c0c"></div>
<div class="sw" style="left:455px;top:149px;background:#a5a5a5;"></div>
<div class="sw" style="left:455px;top:170.5px;width:12px;height:12.5px;background:#ededed"></div>
<div class="sw" style="left:455px;top:184.5px;width:12px;height:12.5px;background:#dbdbdb"></div>
<div class="sw" style="left:455px;top:198.5px;width:12px;height:12.5px;background:#c9c9c9"></div>
<div class="sw" style="left:455px;top:212.5px;width:12px;height:12.5px;background:#7b7b7b"></div>
<div class="sw" style="left:455px;top:226.5px;width:12px;height:12.5px;background:#525252"></div>
<div class="sw" style="left:473px;top:149px;background:#ffc000;"></div>
<div class="sw" style="left:473px;top:170.5px;width:12px;height:12.5px;background:#fff2cc"></div>
<div class="sw" style="left:473px;top:184.5px;width:12px;height:12.5px;background:#ffe699"></div>
<div class="sw" style="left:473px;top:198.5px;width:12px;height:12.5px;background:#ffd966"></div>
<div class="sw" style="left:473px;top:212.5px;width:12px;height:12.5px;background:#bf9000"></div>
<div class="sw" style="left:473px;top:226.5px;width:12px;height:12.5px;background:#7f6000"></div>
<div class="sw" style="left:491px;top:149px;background:#4472c4;"></div>
<div class="sw" style="left:491px;top:170.5px;width:12px;height:12.5px;background:#dae3f3"></div>
<div class="sw" style="left:491px;top:184.5px;width:12px;height:12.5px;background:#b4c7e7"></div>
<div class="sw" style="left:491px;top:198.5px;width:12px;height:12.5px;background:#8faadc"></div>
<div class="sw" style="left:491px;top:212.5px;width:12px;height:12.5px;background:#2f5597"></div>
<div class="sw" style="left:491px;top:226.5px;width:12px;height:12.5px;background:#203864"></div>
<div class="sw" style="left:509px;top:149px;background:#70ad47;"></div>
<div class="sw" style="left:509px;top:170.5px;width:12px;height:12.5px;background:#e2f0d9"></div>
<div class="sw" style="left:509px;top:184.5px;width:12px;height:12.5px;background:#c5e0b4"></div>
<div class="sw" style="left:509px;top:198.5px;width:12px;height:12.5px;background:#a9d18e"></div>
<div class="sw" style="left:509px;top:212.5px;width:12px;height:12.5px;background:#548235"></div>
<div class="sw" style="left:509px;top:226.5px;width:12px;height:12.5px;background:#385723"></div>
<div class="a" style="left:436px;top:148px;width:14px;height:14px;border:1px solid #d9a53a;background:#ed7d31;box-shadow:inset 0 0 0 1px #ffe07a"></div>
<div class="a" style="left:343px;top:244px;width:188px;height:27px;background:#f1f2f5;"></div>
<div class="t" style="left:351px;top:251px;font-size:12px;line-height:14px;color:#444;">标准色</div>
<div class="sw" style="left:347px;top:276px;background:#c00000"></div>
<div class="sw" style="left:365px;top:276px;background:#ff0000"></div>
<div class="sw" style="left:383px;top:276px;background:#ffc000"></div>
<div class="sw" style="left:401px;top:276px;background:#ffff00"></div>
<div class="sw" style="left:419px;top:276px;background:#92d050"></div>
<div class="sw" style="left:437px;top:276px;background:#00b050"></div>
<div class="sw" style="left:455px;top:276px;background:#00b0f0"></div>
<div class="sw" style="left:473px;top:276px;background:#0070c0"></div>
<div class="sw" style="left:491px;top:276px;background:#002060"></div>
<div class="sw" style="left:509px;top:276px;background:#7030a0"></div>
<div class="a" style="left:343px;top:293px;width:188px;height:1px;background:#e3e5e8;"></div>
<div class="t" style="left:375px;top:305px;font-size:12px;line-height:14px;color:#222;">其他颜色(M)...</div>
<svg style="left:0;top:0" width="1014" height="613" viewBox="0 0 1014 613"><path d="M357.2 313.6 C355 313.4 351.2 313 350.6 309.2 C350 304.8 353.6 302.5 357.9 302.5 C362.2 302.5 365.4 305.6 365.4 309.6 C365.4 313.6 362 317.4 358.6 317.4 C357.1 317.4 356.3 316.5 356.6 315.3 C356.9 314.3 357.8 313.7 357.2 313.6 Z" stroke="#333" stroke-width="1.2" fill="none"/><circle cx="353.5" cy="308.4" r="1.05" stroke="#333" stroke-width="1" fill="none"/><circle cx="356.5" cy="305.5" r="1.05" stroke="#333" stroke-width="1" fill="none"/><circle cx="360.4" cy="306.3" r="1.05" stroke="#333" stroke-width="1" fill="none"/><circle cx="362.5" cy="310.4" r="1.05" stroke="#333" stroke-width="1" fill="none"/></svg>
</body>
</html>
